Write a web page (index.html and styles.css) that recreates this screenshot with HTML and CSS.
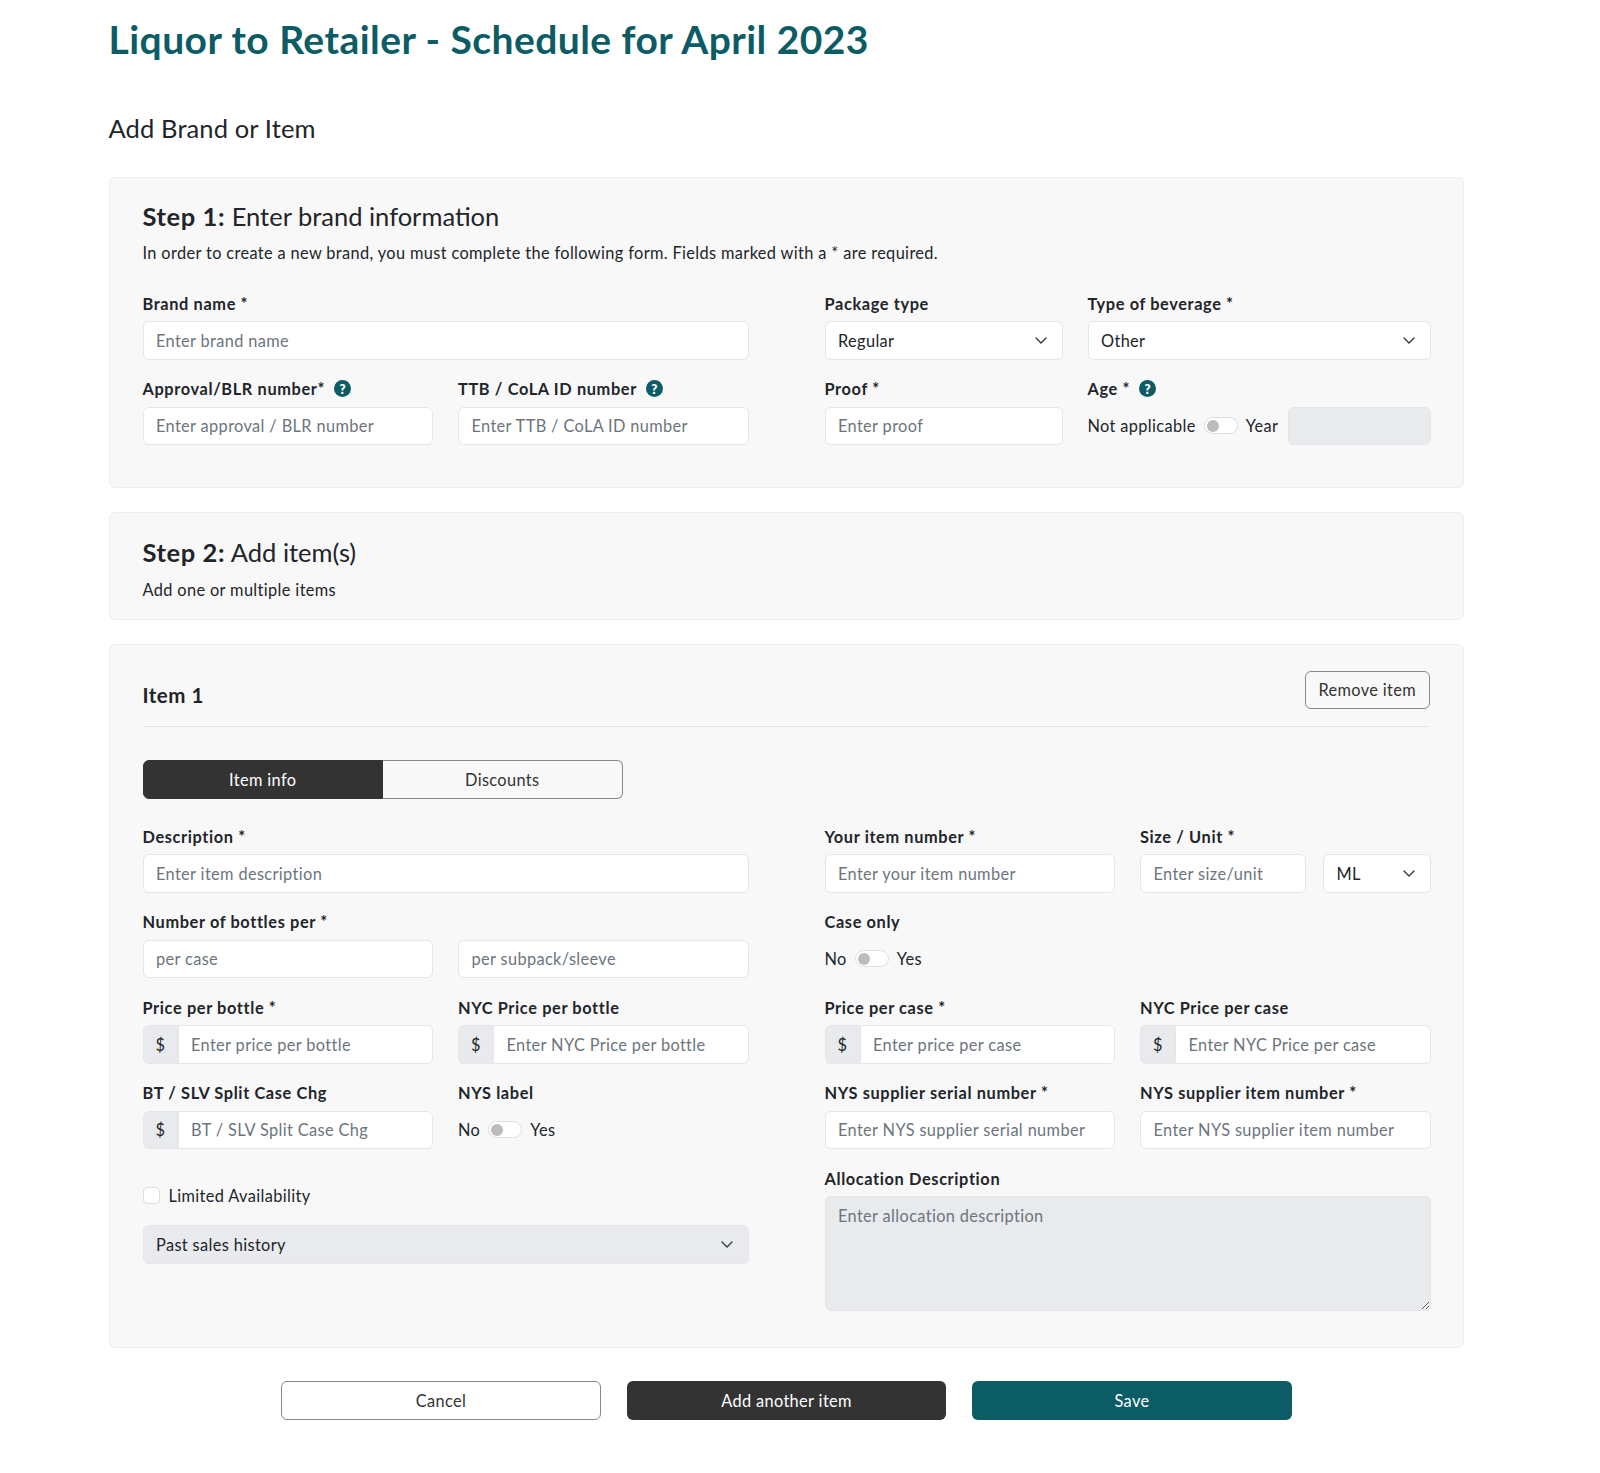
FILE: index.html
```html
<!DOCTYPE html>
<html lang="en">
<head>
    <meta charset="UTF-8">
    <title>Liquor to Retailer - Schedule for April 2023</title>
    <link rel="stylesheet" href="styles.css">
</head>
<body>

<div class="page">
    <h1 class="page-title">Liquor to Retailer - Schedule for April 2023</h1>
    <h2 class="page-subtitle">Add Brand or Item</h2>

    <!-- Step 1 -->
    <section class="panel panel-step1">
        <h3 class="step-title"><strong>Step 1:</strong> Enter brand information</h3>
        <p class="step-text">In order to create a new brand, you must complete the following form. Fields marked with a * are required.</p>

        <div class="columns">
            <div class="col">
                <div class="field span-2">
                    <label>Brand name *</label>
                    <input type="text" placeholder="Enter brand name">
                </div>
                <div class="field">
                    <label>Approval/BLR number* <span class="help">?</span></label>
                    <input type="text" placeholder="Enter approval / BLR number">
                </div>
                <div class="field">
                    <label>TTB / CoLA ID number <span class="help">?</span></label>
                    <input type="text" placeholder="Enter TTB / CoLA ID number">
                </div>
            </div>
            <div class="col col-brand">
                <div class="field">
                    <label>Package type</label>
                    <div class="select">
                        <span>Regular</span>
                        <svg viewBox="0 0 14 14"><path d="m2 5 5 5 5-5"/></svg>
                    </div>
                </div>
                <div class="field">
                    <label>Type of beverage *</label>
                    <div class="select">
                        <span>Other</span>
                        <svg viewBox="0 0 14 14"><path d="m2 5 5 5 5-5"/></svg>
                    </div>
                </div>
                <div class="field">
                    <label>Proof *</label>
                    <input type="text" placeholder="Enter proof">
                </div>
                <div class="field">
                    <label>Age * <span class="help">?</span></label>
                    <div class="switch-row">
                        <span>Not applicable</span>
                        <span class="switch"></span>
                        <span>Year</span>
                        <input type="text" class="year" disabled>
                    </div>
                </div>
            </div>
        </div>
    </section>

    <!-- Step 2 -->
    <section class="panel panel-step2">
        <h3 class="step-title"><strong>Step 2:</strong> Add item(s)</h3>
        <p class="step-text">Add one or multiple items</p>
    </section>

    <section class="panel panel-item">
        <div class="item-head">
            <h4 class="item-title">Item 1</h4>
            <button class="btn-remove">Remove item</button>
        </div>

        <div class="tabs">
            <button class="tab active">Item info</button>
            <button class="tab">Discounts</button>
        </div>

        <div class="columns">
            <div class="col">
                <div class="field span-2">
                    <label>Description *</label>
                    <input type="text" placeholder="Enter item description">
                </div>
                <div class="field span-2">
                    <label>Number of bottles per *</label>
                    <div class="pair">
                        <input type="text" placeholder="per case">
                        <input type="text" placeholder="per subpack/sleeve">
                    </div>
                </div>
                <div class="field">
                    <label>Price per bottle *</label>
                    <div class="money"><span>$</span><input type="text" placeholder="Enter price per bottle"></div>
                </div>
                <div class="field">
                    <label>NYC Price per bottle</label>
                    <div class="money"><span>$</span><input type="text" placeholder="Enter NYC Price per bottle"></div>
                </div>
                <div class="field">
                    <label>BT / SLV Split Case Chg</label>
                    <div class="money"><span>$</span><input type="text" placeholder="BT / SLV Split Case Chg"></div>
                </div>
                <div class="field">
                    <label>NYS label</label>
                    <div class="switch-row">
                        <span>No</span>
                        <span class="switch"></span>
                        <span>Yes</span>
                    </div>
                </div>
                <div class="check-row span-2">
                    <span class="check"></span>
                    <span>Limited Availability</span>
                </div>
                <div class="select select-grey span-2">
                    <span>Past sales history</span>
                    <svg viewBox="0 0 14 14"><path d="m2 5 5 5 5-5"/></svg>
                </div>
            </div>
            <div class="col">
                <div class="field">
                    <label>Your item number *</label>
                    <input type="text" placeholder="Enter your item number">
                </div>
                <div class="field">
                    <label>Size / Unit *</label>
                    <div class="size-unit">
                        <input type="text" placeholder="Enter size/unit">
                        <div class="select select-unit">
                            <span>ML</span>
                            <svg viewBox="0 0 14 14"><path d="m2 5 5 5 5-5"/></svg>
                        </div>
                    </div>
                </div>
                <div class="field span-2">
                    <label>Case only</label>
                    <div class="switch-row">
                        <span>No</span>
                        <span class="switch"></span>
                        <span>Yes</span>
                    </div>
                </div>
                <div class="field">
                    <label>Price per case *</label>
                    <div class="money"><span>$</span><input type="text" placeholder="Enter price per case"></div>
                </div>
                <div class="field">
                    <label>NYC Price per case</label>
                    <div class="money"><span>$</span><input type="text" placeholder="Enter NYC Price per case"></div>
                </div>
                <div class="field">
                    <label>NYS supplier serial number *</label>
                    <input type="text" placeholder="Enter NYS supplier serial number">
                </div>
                <div class="field">
                    <label>NYS supplier item number *</label>
                    <input type="text" placeholder="Enter NYS supplier item number">
                </div>
                <div class="field span-2">
                    <label>Allocation Description</label>
                    <textarea placeholder="Enter allocation description"></textarea>
                </div>
            </div>
        </div>
    </section>

    <div class="actions">
        <button class="btn btn-outline">Cancel</button>
        <button class="btn btn-dark">Add another item</button>
        <button class="btn btn-teal">Save</button>
    </div>
</div>

</body>
</html>
```

FILE: styles.css
```css
* {
    box-sizing: border-box;
}

body {
    margin: 0;
    background: #fff;
    color: #212529;
    font-family: Lato, "Noto Sans", sans-serif;
    font-size: 16.35px;
    letter-spacing: 0.36px;
}

.page {
    width: 1355px;
    margin-left: 108.5px;
    padding-top: 16px;
}

.page-title {
    margin: 0;
    color: #0c5c65;
    font-size: 39px;
    line-height: 46px;
    font-weight: 700;
    letter-spacing: 0.45px;
}

.page-subtitle {
    margin: 49px 0 31px;
    color: #212529;
    font-size: 25.5px;
    line-height: 35px;
    font-weight: 400;
    letter-spacing: 0.12px;
}

.panel {
    background: #f8f8f8;
    border: 1px solid #eeeeee;
    border-radius: 6px;
    padding: 24px 33px 25px;
    margin-bottom: 24px;
}

.panel-step1 { padding-bottom: 42px; }
.panel-step2 { padding-top: 25px; padding-bottom: 17px; }
.panel-item { padding-top: 26px; padding-bottom: 36px; margin-bottom: 33.5px; }

.step-title {
    margin: 0;
    font-size: 25.5px;
    line-height: 28px;
    font-weight: 400;
    letter-spacing: 0;
}

.step-title strong { font-weight: 700; letter-spacing: 0.6px; }

.step-text {
    margin: 11px 0 0;
    line-height: 24px;
}

.panel-step2 .step-text { margin-top: 12px; }

.panel-step1 .columns { margin-top: 26px; }

.columns {
    display: grid;
    grid-template-columns: 606px 606px;
    column-gap: 76px;
}

.col {
    display: grid;
    grid-template-columns: 1fr 1fr;
    column-gap: 25px;
    row-gap: 17px;
    align-content: start;
}

.col-brand { grid-template-columns: 238px 1fr; }

.span-2 { grid-column: span 2; }

.field label {
    display: flex;
    align-items: center;
    gap: 9px;
    height: 24px;
    margin-bottom: 6px;
    font-weight: 700;
    letter-spacing: 0.62px;
}

.help {
    display: inline-flex;
    align-items: center;
    justify-content: center;
    width: 17px;
    height: 17px;
    border-radius: 50%;
    background: #0c5c65;
    color: #fff;
    font-size: 13px;
    font-weight: 800;
    letter-spacing: 0;
}

input, textarea {
    display: block;
    width: 100%;
    height: 38.5px;
    padding: 0 12.5px;
    background: #fff;
    color: #212529;
    border: 1px solid #e6e6e6;
    border-radius: 6px;
    font-family: inherit;
    font-size: inherit;
    letter-spacing: inherit;
    outline: none;
}

input::placeholder, textarea::placeholder {
    color: #6c757d;
    opacity: 1;
}

textarea {
    height: 114.5px;
    padding-top: 7px;
    background: #e9eaee;
    line-height: 24px;
}

.select {
    position: relative;
    display: flex;
    align-items: center;
    height: 38.5px;
    padding: 0 12.5px;
    background: #fff;
    border: 1px solid #e6e6e6;
    border-radius: 6px;
}

.select svg {
    position: absolute;
    right: 14px;
    top: 50%;
    width: 14px;
    height: 14px;
    margin-top: -7px;
    fill: none;
    stroke: #343a40;
    stroke-width: 1.4;
    stroke-linecap: round;
    stroke-linejoin: round;
}

.select-grey { background: #e9eaee; }

.select-unit {
    flex: 0 0 107.5px;
}

.size-unit {
    display: flex;
    gap: 17px;
}

.pair {
    display: grid;
    grid-template-columns: 1fr 1fr;
    gap: 25px;
}

.money {
    display: flex;
}

.money span {
    flex: 0 0 35px;
    display: flex;
    align-items: center;
    justify-content: center;
    height: 38.5px;
    background: #e9eaee;
    border: 1px solid #e6e6e6;
    border-right: none;
    border-radius: 6px 0 0 6px;
}

.money input {
    border-radius: 0 6px 6px 0;
}

.switch-row {
    display: flex;
    align-items: center;
    gap: 8px;
    height: 38.5px;
}

.switch {
    position: relative;
    flex: none;
    width: 34px;
    height: 17px;
    background: #fff;
    border: 1px solid #dedede;
    border-radius: 9px;
}

.switch::before {
    content: "";
    position: absolute;
    left: 2px;
    top: 1.5px;
    width: 12px;
    height: 12px;
    border-radius: 50%;
    background: #bcbcbc;
}

.year {
    flex: 0 0 143px;
    margin-left: auto;
    background: #e9eaee;
}

.check-row {
    display: flex;
    align-items: center;
    gap: 9px;
    height: 24px;
    margin-top: 17px;
    margin-bottom: 1px;
}

.check {
    width: 17px;
    height: 17px;
    background: #fff;
    border: 1px solid #dedede;
    border-radius: 4px;
}

.item-head {
    display: flex;
    justify-content: space-between;
    align-items: flex-end;
    padding-bottom: 17px;
    border-bottom: 1px solid #e6e6e6;
    margin-bottom: 33px;
}

.item-title {
    margin: 0 0 1px;
    font-size: 20.5px;
    line-height: 26px;
    font-weight: 700;
    letter-spacing: 0.5px;
}

button {
    font-family: inherit;
    font-size: inherit;
    letter-spacing: inherit;
    cursor: pointer;
}

.btn-remove {
    width: 124.5px;
    height: 38px;
    padding-bottom: 3px;
    background: transparent;
    color: #333;
    border: 1px solid #888;
    border-radius: 6px;
}

.tabs {
    display: flex;
    width: 480px;
    height: 38.5px;
    margin-bottom: 25.5px;
}

.tab {
    flex: 1;
    background: transparent;
    color: #333;
    border: 1px solid #888;
    border-left: none;
    border-radius: 0 6px 6px 0;
}

.tab.active {
    background: #333;
    color: #fff;
    border: 1px solid #333;
    border-radius: 6px 0 0 6px;
}

.actions {
    display: flex;
    justify-content: center;
    gap: 26px;
    padding-left: 1px;
    padding-bottom: 53px;
}

.btn {
    width: 319.5px;
    height: 38.5px;
    border-radius: 6px;
    border: 1px solid transparent;
}

.btn-outline { background: #fff; color: #333; border-color: #888; }
.btn-dark { background: #333; color: #fff; }
.btn-teal { background: #0c5c65; color: #fff; }
```
